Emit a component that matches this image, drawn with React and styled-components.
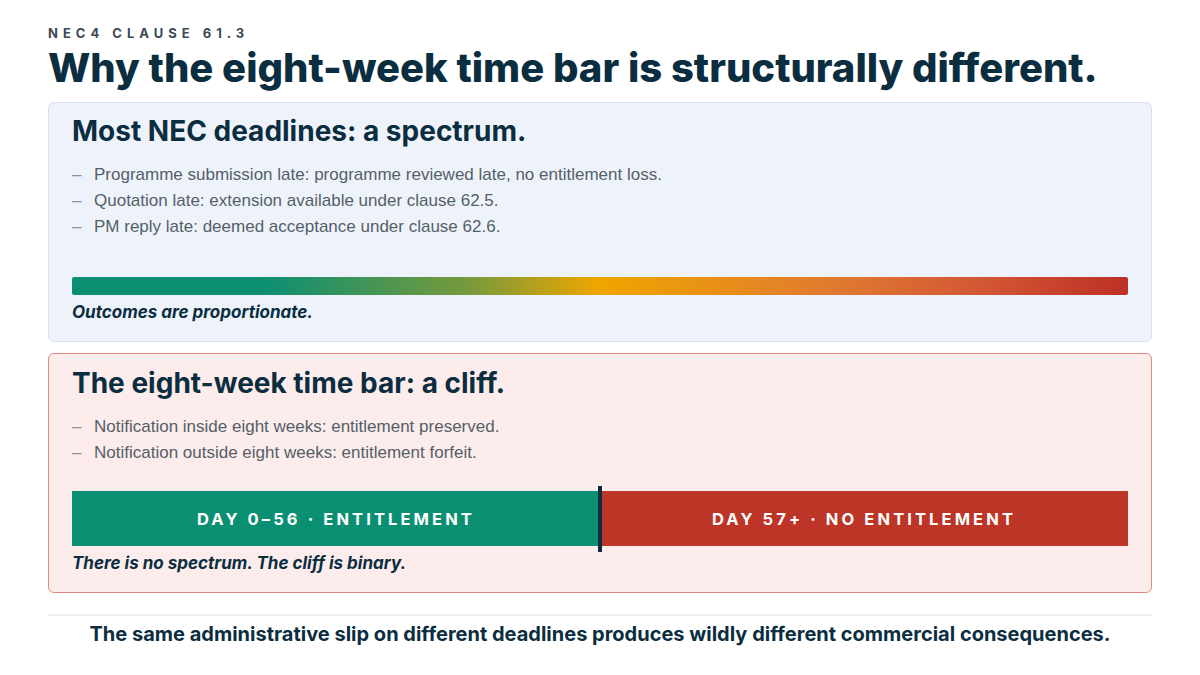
import React from "react";
import styled, { createGlobalStyle } from "styled-components";

const GlobalStyle = createGlobalStyle`
  html, body {
    margin: 0;
    padding: 0;
    background: #ffffff;
  }
  body {
    font-family: Inter, "Liberation Sans", sans-serif;
    color: #0b2d40;
  }
`;

const bullets = {
  spectrum: [
    "Programme submission late: programme reviewed late, no entitlement loss.",
    "Quotation late: extension available under clause 62.5.",
    "PM reply late: deemed acceptance under clause 62.6.",
  ],
  cliff: [
    "Notification inside eight weeks: entitlement preserved.",
    "Notification outside eight weeks: entitlement forfeit.",
  ],
};

function App() {
  return (
    <>
      <GlobalStyle />
      <Slide>
        <Eyebrow>NEC4 Clause 61.3</Eyebrow>
        <Title>Why the eight-week time bar is structurally different.</Title>

        <Card tone="blue">
          <CardTitle>Most NEC deadlines: a spectrum.</CardTitle>
          <List>
            {bullets.spectrum.map((b) => (
              <Item key={b}>{b}</Item>
            ))}
          </List>
          <Bottom>
            <GradientBar />
            <Caption>Outcomes are proportionate.</Caption>
          </Bottom>
        </Card>

        <Card tone="red">
          <CardTitle>The eight-week time bar: a cliff.</CardTitle>
          <List>
            {bullets.cliff.map((b) => (
              <Item key={b}>{b}</Item>
            ))}
          </List>
          <Bottom>
            <Cliff>
              <Segment color="#0b8f73">Day 0–56 · Entitlement</Segment>
              <Segment color="#bd3526">Day 57+ · No entitlement</Segment>
              <Divider />
            </Cliff>
            <Caption>There is no spectrum. The cliff is binary.</Caption>
          </Bottom>
        </Card>

        <Footer>
          The same administrative slip on different deadlines produces wildly
          different commercial consequences.
        </Footer>
      </Slide>
    </>
  );
}

const Slide = styled.div`
  width: 1200px;
  height: 675px;
  box-sizing: border-box;
  padding: 24px 48px 0;
  display: flex;
  flex-direction: column;
`;

const Eyebrow = styled.div`
  font-size: 13px;
  font-weight: 700;
  letter-spacing: 5px;
  text-transform: uppercase;
  color: #3c4a55;
  line-height: 18px;
`;

const Title = styled.h1`
  margin: 2px 0 10px;
  font-size: 40px;
  font-weight: 800;
  line-height: 48px;
  color: #0b2d40;
`;

const Card = styled.section`
  box-sizing: border-box;
  height: 240px;
  margin-bottom: 11px;
  padding: ${(p) => (p.tone === "red" ? "14px" : "13px")} 23px 19px;
  border-radius: 6px;
  display: flex;
  flex-direction: column;
  background: ${(p) => (p.tone === "red" ? "#fcecec" : "#eef3fb")};
  border: ${(p) =>
    p.tone === "red" ? "1.5px solid #e0897d" : "1px solid #d7e1ed"};
`;

const CardTitle = styled.h2`
  margin: 0 0 15px;
  font-size: 28px;
  font-weight: 700;
  line-height: 31px;
  color: #0b2d40;
`;

const List = styled.ul`
  list-style: none;
  margin: 0;
  padding: 0;
`;

const Item = styled.li`
  position: relative;
  padding-left: 22px;
  font-family: "Liberation Sans", Arial, sans-serif;
  font-size: 17px;
  line-height: 26px;
  color: #555f67;

  &::before {
    content: "–";
    position: absolute;
    left: 0;
    color: #8a949b;
  }
`;

const Bottom = styled.div`
  margin-top: auto;
  display: flex;
  flex-direction: column;
  gap: 7px;
`;

const GradientBar = styled.div`
  height: 18px;
  border-radius: 2px;
  background: linear-gradient(
    90deg,
    #0b8f73 0%,
    #0b8f73 18%,
    #7a9a3a 38%,
    #f0a500 50%,
    #e07a30 72%,
    #d45a35 85%,
    #bd3026 100%
  );
`;

const Caption = styled.div`
  font-size: 17px;
  font-weight: 700;
  font-style: italic;
  line-height: 20px;
  color: #0b2d40;
`;

const Cliff = styled.div`
  position: relative;
  display: flex;
  height: 55px;
`;

const Segment = styled.div`
  flex: 1;
  display: flex;
  align-items: center;
  justify-content: center;
  background: ${(p) => p.color};
  color: #ffffff;
  font-size: 16.5px;
  font-weight: 700;
  letter-spacing: 3.1px;
  text-transform: uppercase;
`;

const Divider = styled.div`
  position: absolute;
  left: 50%;
  top: -5px;
  bottom: -6px;
  width: 4px;
  margin-left: -2px;
  background: #0b2d40;
`;

const Footer = styled.p`
  margin: 10px 0 0;
  padding-top: 6px;
  border-top: 2px solid #edf1f5;
  text-align: center;
  font-size: 20px;
  font-weight: 700;
  line-height: 24px;
  color: #0b2d40;
`;

export default App;
